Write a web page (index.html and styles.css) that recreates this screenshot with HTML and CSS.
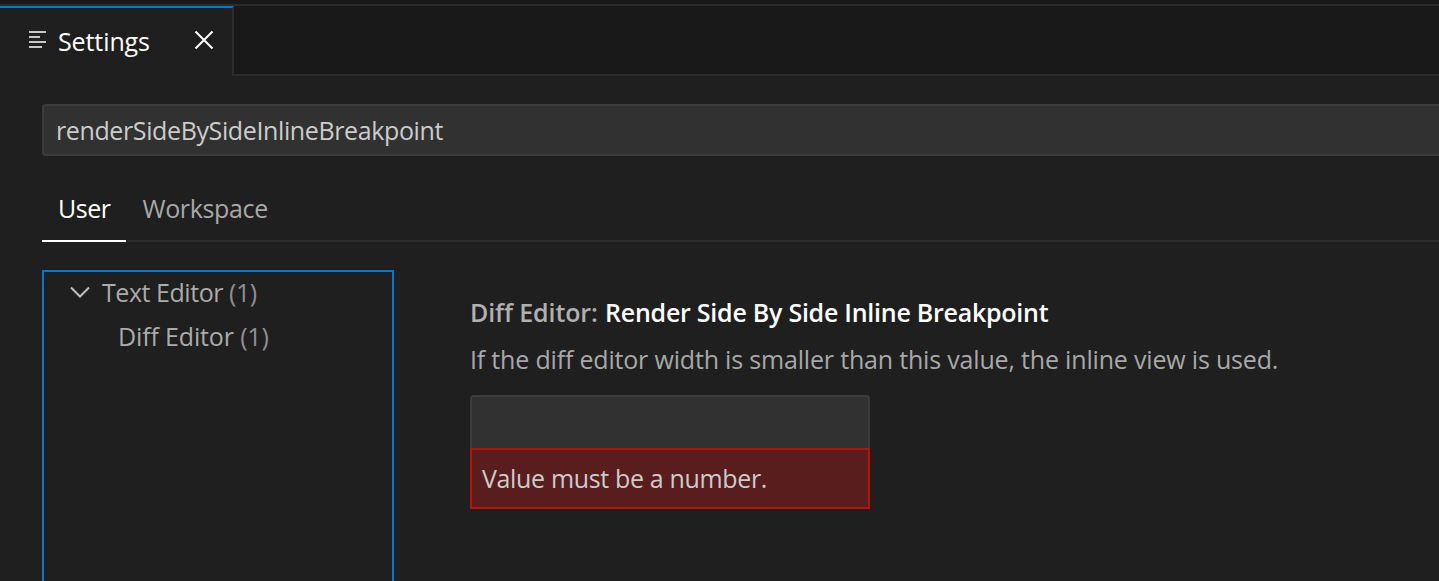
FILE: index.html
```html
<!DOCTYPE html>
<html lang="en">
<head>
<meta charset="utf-8">
<title>Settings</title>
<link rel="stylesheet" href="styles.css">
</head>
<body>
<div class="titlestrip"></div>
<div class="tabbar">
  <div class="tab">
    <svg class="tab-icon" width="18" height="18" viewBox="0 0 18 18"><path d="M0 1h17M0 6h11M0 11h17M0 16h13" stroke="#c8c8c8" stroke-width="2" fill="none"/></svg>
    <span class="tab-label">Settings</span>
    <svg class="tab-close" width="20" height="20" viewBox="0 0 20 20"><path d="M1.500 1.500l17 17M18.500 1.500l-17 17" stroke="#fff" stroke-width="2" fill="none"/></svg>
  </div>
</div>
<main class="editor">
  <div class="search">renderSideBySideInlineBreakpoint</div>
  <nav class="scopes">
    <span class="scope active">User</span>
    <span class="scope">Workspace</span>
  </nav>
  <div class="body">
    <aside class="tree">
      <div class="tree-row first">
        <svg class="chevron" width="20" height="12" viewBox="0 0 20 12"><path d="M1 1.500l9 9 9-9" stroke="#c0c0c0" stroke-width="2" fill="none"/></svg>
        <span>Text Editor <span class="count">(1)</span></span>
      </div>
      <div class="tree-row child"><span>Diff Editor <span class="count">(1)</span></span></div>
    </aside>
    <section class="setting">
      <h2 class="setting-title">Diff Editor: <strong>Render Side By Side Inline Breakpoint</strong></h2>
      <p class="setting-desc">If the diff editor width is smaller than this value, the inline view is used.</p>
      <div class="field"></div>
      <div class="error">Value must be a number.</div>
    </section>
  </div>
</main>
</body>
</html>
```
FILE: styles.css
```css
* { box-sizing: border-box; }
html, body { margin: 0; height: 100%; overflow: hidden; }
body {
  background: #1f1f1f;
  color: #ccc;
  font-family: "Open Sans", "Noto Sans", sans-serif;
  font-size: 25px;
}
.titlestrip { height: 4px; background: #181818; }
.tabbar {
  height: 72px;
  background: #181818;
  border-top: 2px solid #2b2b2b;
  border-bottom: 2px solid #2b2b2b;
  display: flex;
}
.tab {
  width: 234px;
  height: 70px;
  flex: none;
  background: #1f1f1f;
  border-top: 2px solid #0078d4;
  border-right: 2px solid #2b2b2b;
  display: flex;
  align-items: center;
  padding-left: 29px;
}
.tab-icon { flex: none; margin-top: -4px; margin-right: 2px; }
.tab-label { margin-left: 9px; color: #fff; letter-spacing: -0.1px; margin-top: -2px; }
.tab-close { flex: none; margin-left: 44px; margin-top: -4px; }
.editor { padding: 28px 0 0 42px; }
.search {
  height: 52px;
  width: 1420px;
  background: #313131;
  border: 2px solid #3c3c3c;
  border-radius: 4px;
  padding-left: 12px;
  line-height: 48px;
  letter-spacing: -0.38px;
  color: #ccc;
}
.scopes {
  margin-top: 30px;
  height: 56px;
  width: 1420px;
  border-bottom: 2px solid #2b2b2b;
  display: flex;
}
.scope {
  padding: 0 16px;
  line-height: 44px;
  color: #a8a8a8;
  letter-spacing: -0.35px;
}
.scope.active {
  color: #fff;
  border-bottom: 2px solid #fff;
  height: 56px;
  letter-spacing: -0.5px;
}
.body { display: flex; margin-top: 28px; }
.tree {
  width: 352px;
  height: 400px;
  flex: none;
  border: 2px solid #0078d4;
  color: #ababab;
}
.tree-row {
  height: 44px;
  display: flex;
  align-items: center;
  padding-left: 26px;
  letter-spacing: -0.45px;
  white-space: pre;
}
.tree-row.first { margin-top: -2px; }
.chevron { margin-right: 12px; flex: none; }
.tree-row.child { padding-left: 74px; letter-spacing: -0.15px; }
.count { color: #8f8f8f; }
.setting { margin-left: 76px; padding-top: 24px; width: 900px; }
.setting-title {
  margin: 0;
  font-size: 25px;
  font-weight: 600;
  line-height: 36px;
  color: #b0b0b0;
  letter-spacing: -0.12px;
  white-space: nowrap;
}
.setting-title strong {
  font-weight: 600;
  color: #fff;
  margin-left: 1px;
  letter-spacing: -0.25px;
}
.setting-desc {
  margin: 11px 0 0;
  line-height: 36px;
  color: #a8a8a8;
  letter-spacing: -0.18px;
  white-space: nowrap;
}
.field {
  margin-top: 18px;
  width: 400px;
  height: 54px;
  background: #313131;
  border: 2px solid #3c3c3c;
  border-bottom: 0;
  border-radius: 4px 4px 0 0;
}
.error {
  margin-top: -1px;
  width: 400px;
  height: 61px;
  background: #5a1d1d;
  border: 2px solid #be1100;
  padding-left: 10px;
  line-height: 56px;
  color: #ccc;
  letter-spacing: -0.34px;
}
```
